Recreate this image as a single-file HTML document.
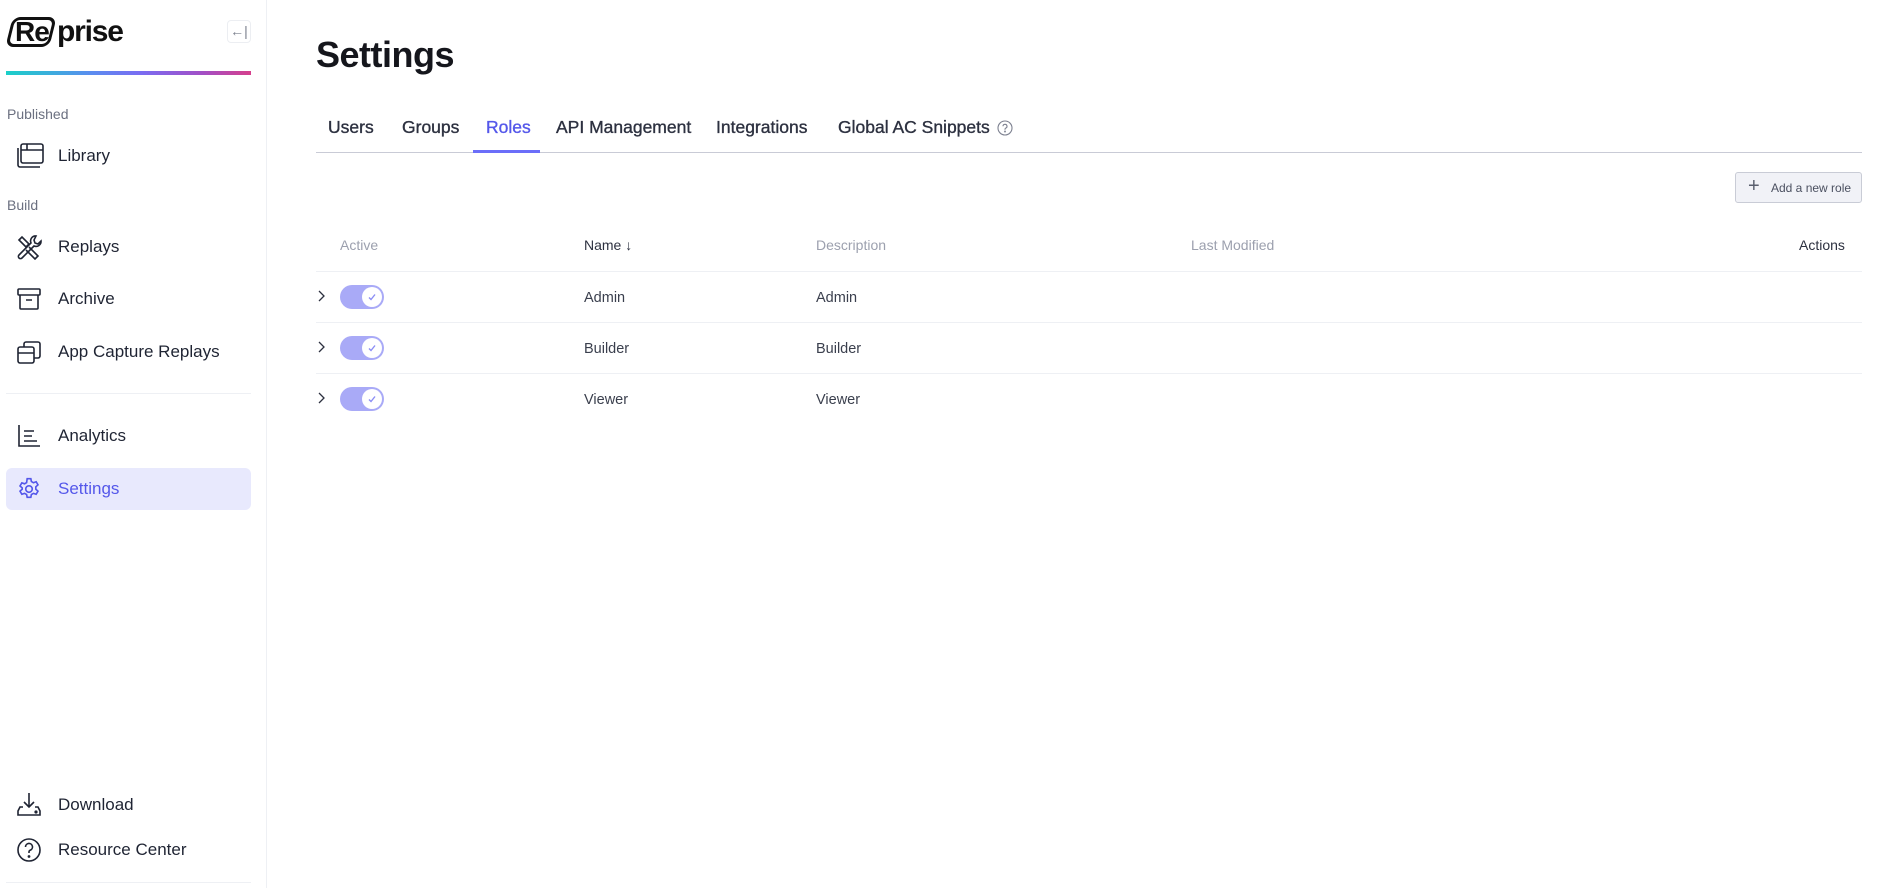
<!DOCTYPE html>
<html><head><meta charset="utf-8"><style>
*{box-sizing:border-box;margin:0;padding:0}
body{width:1885px;height:888px;overflow:hidden;background:#fff;font-family:"Liberation Sans",sans-serif;color:#1f2433;position:relative}
.abs{position:absolute}
.side{position:absolute;left:0;top:0;width:267px;height:888px;border-right:1px solid #eef0f4}
.sec{position:absolute;left:7px;font-size:14px;color:#6b7080}
.item{position:absolute;left:6px;width:245px;height:42px;display:flex;align-items:center;font-size:17px;color:#1f2433}
.item svg{position:absolute;left:10px}
.item span{position:absolute;left:52px}
.tab{position:absolute;top:117px;font-size:17.5px;color:#2d3140;-webkit-text-stroke:0.35px #2d3140}
.th{position:absolute;top:237px;font-size:14px;color:#9ca0ae}
.td{position:absolute;font-size:14.5px;color:#3a3f4d}
.line{position:absolute;left:316px;width:1546px;height:1px;background:#eef0f4}
.tog{position:absolute;left:340px;width:44px;height:24px;border-radius:12px;background:#a9aaf7}
.tog::after{content:"";position:absolute;right:2px;top:2px;width:20px;height:20px;border-radius:50%;background:#fff}
.tog svg{position:absolute;right:6px;top:6px;z-index:2}
.chev{position:absolute;left:317px}
</style></head><body>
<div class="side">
  <div class="abs" style="left:9px;top:17px;width:44px;height:30px;border:3.5px solid #111;border-radius:8px;transform:skewX(-14deg)"></div>
  <div class="abs" style="left:15px;top:16px;font-size:28px;font-weight:bold;color:#111;letter-spacing:-1px">Re</div>
  <div class="abs" style="left:57px;top:15px;font-size:30px;font-weight:bold;color:#111;letter-spacing:-1.2px">prise</div>
  <div class="abs" style="left:227px;top:20px;width:24px;height:23px;border:1px solid #eceef2;border-radius:4px;font-size:14px;color:#7a7f8c;text-align:center;line-height:21px">&#8592;|</div>
  <div class="abs" style="left:6px;top:71px;width:245px;height:4px;background:linear-gradient(90deg,#1ad0c8,#5b8cf0 35%,#7a6cf2 55%,#a24fc6 80%,#d63f8c)"></div>
  <div class="sec" style="top:106px">Published</div>
  <div class="item" style="top:135px"><svg width="28" height="26" viewBox="0 0 28 26" fill="none" stroke="#1f2433" stroke-width="1.6"><rect x="5" y="1" width="22" height="19" rx="2"/><path d="M5 7h22M11 1v6"/><path d="M2 5v17a2 2 0 0 0 2 2h20"/></svg><span>Library</span></div>
  <div class="sec" style="top:197px">Build</div>
  <div class="item" style="top:226px"><svg width="26" height="26" viewBox="0 0 26 26" fill="none" stroke="#1f2433" stroke-width="1.6"><path d="M3 6l3-3 7 7-3 3z"/><path d="M13 13l9 9-3 3-9-9"/><path d="M20 2a5 5 0 0 0-5 7L3 21a2 2 0 0 0 3 3L18 12a5 5 0 0 0 7-5l-3 3-3-1-1-3z"/></svg><span>Replays</span></div>
  <div class="item" style="top:278px"><svg width="26" height="26" viewBox="0 0 26 26" fill="none" stroke="#1f2433" stroke-width="1.6"><rect x="2" y="3" width="22" height="6" rx="1"/><path d="M4 9v13a1 1 0 0 0 1 1h16a1 1 0 0 0 1-1V9M10 14h6"/></svg><span>Archive</span></div>
  <div class="item" style="top:331px"><svg width="26" height="26" viewBox="0 0 26 26" fill="none" stroke="#1f2433" stroke-width="1.6"><rect x="2" y="8" width="16" height="16" rx="2"/><path d="M2 14h16M8 8V5a2 2 0 0 1 2-2h12a2 2 0 0 1 2 2v12a2 2 0 0 1-2 2h-4"/></svg><span>App Capture Replays</span></div>
  <div class="abs" style="left:6px;top:393px;width:245px;height:1px;background:#eef0f4"></div>
  <div class="item" style="top:415px"><svg width="26" height="26" viewBox="0 0 26 26" fill="none" stroke="#1f2433" stroke-width="1.6"><path d="M3 2v21h21M8 8h10M8 13h8M8 18h13"/></svg><span>Analytics</span></div>
  <div class="item" style="top:468px;background:#e8e9fd;border-radius:6px;color:#5457ea"><svg width="26" height="26" viewBox="0 0 24 24" fill="none" stroke="#5457ea" stroke-width="1.5"><circle cx="12" cy="12" r="3"/><path d="M10.3 2.5h3.4l.5 2.6 1.9 1.1 2.5-.9 1.7 2.9-2 1.8v2.2l2 1.8-1.7 2.9-2.5-.9-1.9 1.1-.5 2.6h-3.4l-.5-2.6-1.9-1.1-2.5.9-1.700-2.9 2-1.8V11l-2-1.8 1.7-2.9 2.5.9 1.9-1.1z"/></svg><span>Settings</span></div>
  <div class="item" style="top:784px"><svg width="26" height="26" viewBox="0 0 26 26" fill="none" stroke="#1f2433" stroke-width="1.6"><path d="M13 1v14M8 10l5 5 5-5"/><path d="M7 15H4l-2 4v4h22v-4l-2-4h-3"/><circle cx="20" cy="20" r=".8" fill="#1f2433"/></svg><span>Download</span></div>
  <div class="item" style="top:829px"><svg width="26" height="26" viewBox="0 0 26 26" fill="none" stroke="#1f2433" stroke-width="1.6"><circle cx="13" cy="13" r="11"/><path d="M9.5 10a3.5 3.5 0 1 1 4.5 3.3c-.7.3-1 .9-1 1.7v1"/><circle cx="13" cy="19.5" r=".6" fill="#1f2433"/></svg><span>Resource Center</span></div>
  <div class="abs" style="left:6px;top:882px;width:245px;height:1px;background:#eef0f4"></div>
</div>

<div class="abs" style="left:316px;top:34px;font-size:36px;font-weight:bold;color:#15161c;letter-spacing:-0.5px">Settings</div>

<div class="tab" style="left:328px">Users</div>
<div class="tab" style="left:402px">Groups</div>
<div class="tab" style="left:486px;color:#5457ea;-webkit-text-stroke:0.35px #5457ea">Roles</div>
<div class="tab" style="left:556px">API Management</div>
<div class="tab" style="left:716px">Integrations</div>
<div class="tab" style="left:838px">Global AC Snippets</div>
<svg class="abs" style="left:997px;top:120px" width="16" height="16" viewBox="0 0 16 16" fill="none" stroke="#7d8190" stroke-width="1.1"><circle cx="8" cy="8" r="7"/><path d="M6 6.3a2 2 0 1 1 2.6 1.9c-.4.2-.6.5-.6.9v.6"/><circle cx="8" cy="11.5" r=".4" fill="#7d8190"/></svg>
<div class="abs" style="left:316px;top:152px;width:1546px;height:1px;background:#c9cbd6"></div>
<div class="abs" style="left:473px;top:150px;width:67px;height:3px;background:#6b6ef9"></div>

<div class="abs" style="left:1735px;top:172px;width:127px;height:31px;background:#f1f2f7;border:1px solid #c9ccd6;border-radius:3px"></div>
<div class="abs" style="left:1748px;top:175px;font-size:20px;color:#5a5f6e">+</div>
<div class="abs" style="left:1771px;top:181px;font-size:12px;color:#4b5060">Add a new role</div>

<div class="th" style="left:340px">Active</div>
<div class="th" style="left:584px;color:#2d3140">Name &#8595;</div>
<div class="th" style="left:816px">Description</div>
<div class="th" style="left:1191px">Last Modified</div>
<div class="th" style="left:1799px;color:#2d3140">Actions</div>

<div class="line" style="top:271px"></div>
<div class="line" style="top:322px"></div>
<div class="line" style="top:373px"></div>

<svg class="chev" style="top:290px" width="8" height="12" viewBox="0 0 8 12" fill="none" stroke="#2d3140" stroke-width="1.3"><path d="M2 1l5 5-5 5"/></svg>
<svg class="chev" style="top:341px" width="8" height="12" viewBox="0 0 8 12" fill="none" stroke="#2d3140" stroke-width="1.3"><path d="M2 1l5 5-5 5"/></svg>
<svg class="chev" style="top:392px" width="8" height="12" viewBox="0 0 8 12" fill="none" stroke="#2d3140" stroke-width="1.3"><path d="M2 1l5 5-5 5"/></svg>
<div class="tog" style="top:285px"><svg width="12" height="12" viewBox="0 0 12 12" fill="none" stroke="#8b8df5" stroke-width="1.4"><path d="M3 6.5l2 2 4-5"/></svg></div>
<div class="tog" style="top:336px"><svg width="12" height="12" viewBox="0 0 12 12" fill="none" stroke="#8b8df5" stroke-width="1.4"><path d="M3 6.5l2 2 4-5"/></svg></div>
<div class="tog" style="top:387px"><svg width="12" height="12" viewBox="0 0 12 12" fill="none" stroke="#8b8df5" stroke-width="1.4"><path d="M3 6.5l2 2 4-5"/></svg></div>

<div class="td" style="left:584px;top:290px">Admin</div>
<div class="td" style="left:816px;top:290px">Admin</div>
<div class="td" style="left:584px;top:341px">Builder</div>
<div class="td" style="left:816px;top:341px">Builder</div>
<div class="td" style="left:584px;top:392px">Viewer</div>
<div class="td" style="left:816px;top:392px">Viewer</div>
</body></html>
